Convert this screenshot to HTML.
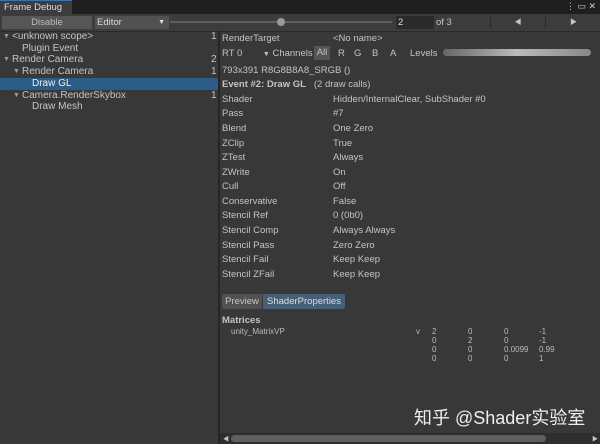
<!DOCTYPE html><html><head><style>
body{margin:0;width:600px;height:444px;background:#383838;font-family:"Liberation Sans","Noto Sans CJK SC",sans-serif;font-size:9.5px;color:#c4c4c4;position:relative;overflow:hidden}
.a{position:absolute;white-space:nowrap}
.r{position:absolute;left:0;width:218px;height:12px;line-height:12px;font-size:10px}
.l{position:absolute;left:222px;white-space:nowrap}
.v{position:absolute;left:333px;white-space:nowrap}
.m{position:absolute;font-size:8px;color:#bbb}
</style></head><body>
<div class="a" style="left:0;top:0;width:600px;height:14px;background:#1f1f1f"></div>
<div class="a" style="left:0;top:0;width:72px;height:14px;background:#3c3c3c;border-top:1px solid #3a72b0;line-height:14px;padding-left:4px;box-sizing:border-box;color:#ddd">Frame Debug</div>
<div class="a" style="right:4px;top:1px;color:#ccc;font-size:9px">⋮ ▭ ✕</div>
<div class="a" style="left:0;top:14px;width:600px;height:17px;background:#3c3c3c;border-bottom:1px solid #2a2a2a"></div>
<div class="a" style="left:2px;top:16px;width:90px;height:13px;background:#565656;text-align:center;line-height:13px;color:#bbb">Disable</div>
<div class="a" style="left:95px;top:16px;width:72px;height:13px;background:#515151;line-height:13px;padding-left:2px;color:#ddd">Editor<span style="position:absolute;right:4px;font-size:7px">▼</span></div>
<div class="a" style="left:170px;top:21px;width:222px;height:2px;background:#5e5e5e"></div>
<div class="a" style="left:277px;top:18px;width:8px;height:8px;border-radius:50%;background:#999"></div>
<div class="a" style="left:396px;top:16px;width:36px;height:13px;background:#2a2a2a;line-height:13px;padding-left:2px;color:#ddd">2</div>
<div class="a" style="left:436px;top:16px;line-height:13px">of 3</div>
<div class="a" style="left:490px;top:16px;width:54px;height:13px;border-left:1px solid #2a2a2a;text-align:center;line-height:13px;font-size:7px">◀</div>
<div class="a" style="left:545px;top:16px;width:55px;height:13px;border-left:1px solid #2a2a2a;text-align:center;line-height:13px;font-size:7px">▶</div>
<div class="a" style="left:218px;top:31px;width:2px;height:413px;background:#262626"></div>
<div class="r" style="top:31px"><span class="a" style="left:3px;font-size:7px;color:#999">▼</span><span class="a" style="left:12px">&lt;unknown scope&gt;</span><span class="a" style="left:211px">1</span></div>
<div class="r" style="top:43px"><span class="a" style="left:22px">Plugin Event</span></div>
<div class="r" style="top:54px"><span class="a" style="left:3px;font-size:7px;color:#999">▼</span><span class="a" style="left:12px">Render Camera</span><span class="a" style="left:211px">2</span></div>
<div class="r" style="top:66px"><span class="a" style="left:13px;font-size:7px;color:#999">▼</span><span class="a" style="left:22px">Render Camera</span><span class="a" style="left:211px">1</span></div>
<div class="r" style="top:78px;background:#2c5d87;color:#eee"><span class="a" style="left:32px">Draw GL</span></div>
<div class="r" style="top:90px"><span class="a" style="left:13px;font-size:7px;color:#999">▼</span><span class="a" style="left:22px">Camera.RenderSkybox</span><span class="a" style="left:211px">1</span></div>
<div class="r" style="top:101px"><span class="a" style="left:32px">Draw Mesh</span></div>
<div class="l" style="top:33px">RenderTarget</div><div class="v" style="top:33px">&lt;No name&gt;</div>
<div class="l" style="top:48px">RT 0 <span style="margin-left:18px;font-size:7px">▼</span> Channels</div>
<div class="a" style="left:314px;top:46px;width:16px;height:14px;background:#555;text-align:center;line-height:14px">All</div>
<div class="a" style="left:338px;top:48px">R</div><div class="a" style="left:354px;top:48px">G</div><div class="a" style="left:372px;top:48px">B</div><div class="a" style="left:390px;top:48px">A</div>
<div class="a" style="left:410px;top:48px">Levels</div>
<div class="a" style="left:443px;top:49px;width:148px;height:7px;border-radius:4px;background:linear-gradient(90deg,#666,#bbb 50%,#888)"></div>
<div class="l" style="top:65px">793x391 R8G8B8A8_SRGB ()</div>
<div class="l" style="top:79px"><b>Event #2: Draw GL</b> &nbsp;&nbsp;(2 draw calls)</div>
<div class="l" style="top:94px">Shader</div><div class="v" style="top:94px">Hidden/InternalClear, SubShader #0</div>
<div class="l" style="top:108px">Pass</div><div class="v" style="top:108px">#7</div>
<div class="l" style="top:123px">Blend</div><div class="v" style="top:123px">One Zero</div>
<div class="l" style="top:138px">ZClip</div><div class="v" style="top:138px">True</div>
<div class="l" style="top:152px">ZTest</div><div class="v" style="top:152px">Always</div>
<div class="l" style="top:167px">ZWrite</div><div class="v" style="top:167px">On</div>
<div class="l" style="top:181px">Cull</div><div class="v" style="top:181px">Off</div>
<div class="l" style="top:196px">Conservative</div><div class="v" style="top:196px">False</div>
<div class="l" style="top:210px">Stencil Ref</div><div class="v" style="top:210px">0 (0b0)</div>
<div class="l" style="top:225px">Stencil Comp</div><div class="v" style="top:225px">Always Always</div>
<div class="l" style="top:240px">Stencil Pass</div><div class="v" style="top:240px">Zero Zero</div>
<div class="l" style="top:254px">Stencil Fail</div><div class="v" style="top:254px">Keep Keep</div>
<div class="l" style="top:269px">Stencil ZFail</div><div class="v" style="top:269px">Keep Keep</div>
<div class="a" style="left:222px;top:294px;width:40px;height:15px;background:#515151;line-height:15px;text-align:center;border-radius:2px 0 0 2px">Preview</div>
<div class="a" style="left:263px;top:294px;width:82px;height:15px;background:#46607a;line-height:15px;text-align:center;color:#ddd;border-radius:0 2px 2px 0">ShaderProperties</div>
<div class="l" style="top:315px;font-weight:bold">Matrices</div>
<div class="m" style="left:231px;top:327px">unity_MatrixVP</div>
<div class="m" style="left:416px;top:327px">v</div>
<div class="m" style="left:432px;top:327px;line-height:9px">2<br>0<br>0<br>0</div>
<div class="m" style="left:468px;top:327px;line-height:9px">0<br>2<br>0<br>0</div>
<div class="m" style="left:504px;top:327px;line-height:9px">0<br>0<br>0.0099<br>0</div>
<div class="m" style="left:539px;top:327px;line-height:9px">-1<br>-1<br>0.99<br>1</div>
<div class="a" style="left:414px;top:404px;font-size:18px;color:#eee">知乎 @Shader实验室</div>
<div class="a" style="left:220px;top:433px;width:380px;height:11px;background:#2e2e2e"></div>
<div class="a" style="left:231px;top:435px;width:315px;height:7px;border-radius:4px;background:#5f5f5f"></div>
<div class="a" style="left:223px;top:434px;font-size:6px">◀</div><div class="a" style="left:592px;top:434px;font-size:6px">▶</div>
</body></html>
